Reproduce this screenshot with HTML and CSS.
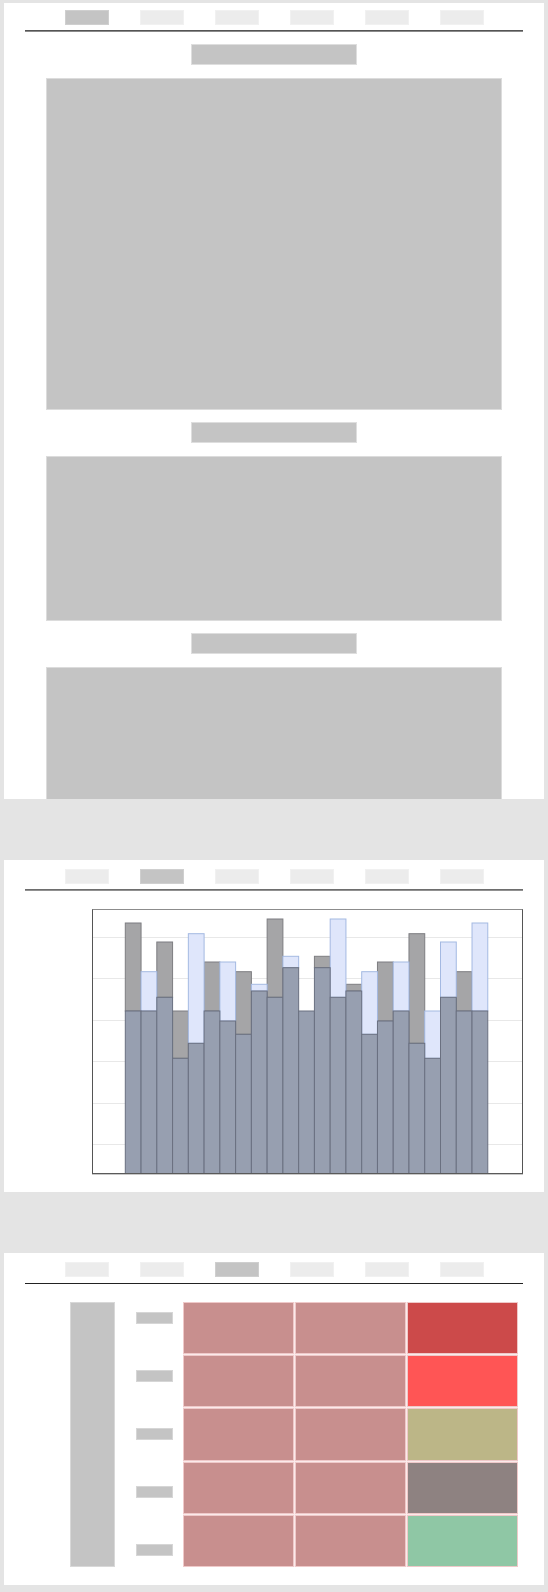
FILE: index.html
```html
<!DOCTYPE html>
<html>
<head>
<meta charset="utf-8">
<title>Slides</title>
<link rel="stylesheet" href="styles.css">
</head>
<body>
<div class="page">
  <section class="card card-first">
    <nav class="tabs">
      <span class="tab active"></span><span class="tab"></span><span class="tab"></span><span class="tab"></span><span class="tab"></span><span class="tab"></span>
    </nav>
    <div class="rule rule-gray"></div>
    <div class="title"></div>
    <div class="box box-tall"></div>
    <div class="title"></div>
    <div class="box box-mid"></div>
    <div class="title"></div>
    <div class="box box-tall"></div>
  </section>

  <section class="card card-small">
    <nav class="tabs">
      <span class="tab"></span><span class="tab active"></span><span class="tab"></span><span class="tab"></span><span class="tab"></span><span class="tab"></span>
    </nav>
    <div class="rule rule-mid"></div>
    <div class="chart">
      <svg class="chart-svg" width="429" height="263" viewBox="0 0 429 263">
        <g class="grid">
          <line x1="0" y1="27.5" x2="429" y2="27.5"/>
          <line x1="0" y1="68.5" x2="429" y2="68.5"/>
          <line x1="0" y1="110.5" x2="429" y2="110.5"/>
          <line x1="0" y1="151.5" x2="429" y2="151.5"/>
          <line x1="0" y1="193.5" x2="429" y2="193.5"/>
          <line x1="0" y1="234.5" x2="429" y2="234.5"/>
        </g>
        <g class="ex-g">
          <rect x="32.3" y="13" width="15.76" height="88"/>
          <rect x="63.82" y="32" width="15.76" height="55.3"/>
          <rect x="79.58" y="101" width="15.76" height="47.3"/>
          <rect x="111.1" y="52" width="15.76" height="49"/>
          <rect x="142.62" y="61.7" width="15.76" height="62.6"/>
          <rect x="174.14" y="9" width="15.76" height="78.3"/>
          <rect x="221.42" y="46.3" width="15.76" height="11.4"/>
          <rect x="252.94" y="74.3" width="15.76" height="6.7"/>
          <rect x="284.46" y="52" width="15.76" height="59"/>
          <rect x="315.98" y="23.7" width="15.76" height="109.6"/>
          <rect x="363.26" y="61.7" width="15.76" height="39.3"/>
        </g>
        <g class="ex-b">
          <rect x="48.06" y="61.7" width="15.76" height="39.3"/>
          <rect x="95.34" y="23.7" width="15.76" height="109.6"/>
          <rect x="126.86" y="52" width="15.76" height="59"/>
          <rect x="158.38" y="74.3" width="15.76" height="6.7"/>
          <rect x="189.9" y="46.3" width="15.76" height="11.4"/>
          <rect x="237.18" y="9" width="15.76" height="78.3"/>
          <rect x="268.7" y="61.7" width="15.76" height="62.6"/>
          <rect x="300.22" y="52" width="15.76" height="49"/>
          <rect x="331.74" y="101" width="15.76" height="47.3"/>
          <rect x="347.5" y="32" width="15.76" height="55.3"/>
          <rect x="379.02" y="13" width="15.76" height="88"/>
        </g>
        <g class="ov">
          <rect x="32.3" y="101" width="15.76" height="163"/>
          <rect x="48.06" y="101" width="15.76" height="163"/>
          <rect x="63.82" y="87.3" width="15.76" height="176.7"/>
          <rect x="79.58" y="148.3" width="15.76" height="115.7"/>
          <rect x="95.34" y="133.3" width="15.76" height="130.7"/>
          <rect x="111.1" y="101" width="15.76" height="163"/>
          <rect x="126.86" y="111" width="15.76" height="153"/>
          <rect x="142.62" y="124.3" width="15.76" height="139.7"/>
          <rect x="158.38" y="81" width="15.76" height="183"/>
          <rect x="174.14" y="87.3" width="15.76" height="176.7"/>
          <rect x="189.9" y="57.7" width="15.76" height="206.3"/>
          <rect x="205.66" y="101" width="15.76" height="163"/>
          <rect x="221.42" y="57.7" width="15.76" height="206.3"/>
          <rect x="237.18" y="87.3" width="15.76" height="176.7"/>
          <rect x="252.94" y="81" width="15.76" height="183"/>
          <rect x="268.7" y="124.3" width="15.76" height="139.7"/>
          <rect x="284.46" y="111" width="15.76" height="153"/>
          <rect x="300.22" y="101" width="15.76" height="163"/>
          <rect x="315.98" y="133.3" width="15.76" height="130.7"/>
          <rect x="331.74" y="148.3" width="15.76" height="115.7"/>
          <rect x="347.5" y="87.3" width="15.76" height="176.7"/>
          <rect x="363.26" y="101" width="15.76" height="163"/>
          <rect x="379.02" y="101" width="15.76" height="163"/>
        </g>
      </svg>
    </div>
  </section>

  <section class="card card-small">
    <nav class="tabs">
      <span class="tab"></span><span class="tab"></span><span class="tab active"></span><span class="tab"></span><span class="tab"></span><span class="tab"></span>
    </nav>
    <div class="rule rule-dark"></div>
    <div class="heat">
      <div class="heat-axis"></div>
      <div class="heat-labels">
        <span class="heat-label"></span><span class="heat-label"></span><span class="heat-label"></span><span class="heat-label"></span><span class="heat-label"></span>
      </div>
      <div class="heat-grid">
        <div class="cell"></div><div class="cell"></div><div class="cell c-red"></div>
        <div class="cell"></div><div class="cell"></div><div class="cell c-bright"></div>
        <div class="cell"></div><div class="cell"></div><div class="cell c-khaki"></div>
        <div class="cell"></div><div class="cell"></div><div class="cell c-gray"></div>
        <div class="cell"></div><div class="cell"></div><div class="cell c-green"></div>
      </div>
    </div>
  </section>
</div>
</body>
</html>
```

FILE: styles.css
```css
* {
  box-sizing: border-box;
}

html, body {
  margin: 0;
  padding: 0;
  background: #e4e4e4;
  font-family: "Liberation Sans", Arial, sans-serif;
}

.page {
  padding: 3px 4px 0 4px;
  display: flex;
  flex-direction: column;
  gap: 61px;
}

.card {
  background: #ffffff;
  width: 540px;
  overflow: hidden;
  padding-top: 9px;
}

.card-first {
  height: 796px;
  padding-top: 7px;
}

.card-small {
  height: 332px;
}

/* tabs */
.tabs {
  display: flex;
  justify-content: center;
  height: 13px;
}

.tab {
  width: 75px;
  height: 13px;
  display: flex;
  justify-content: center;
  position: relative;
}

.tab::before {
  content: "";
  width: 42px;
  height: 13px;
  background: #ececec;
  border: 1px solid #f1f1f1;
}

.tab.active::before {
  background: #c4c4c4;
  border-color: #cfcfcf;
}

/* rule under tabs */
.rule {
  margin: 7px 21px 0 21px;
  height: 2px;
}

.rule-gray {
  border-top: 1px solid #555555;
  border-bottom: 1px solid #8a8a8a;
}

.rule-mid {
  border-top: 1px solid #6e6e6e;
  border-bottom: 1px solid #909090;
}

.rule-dark {
  height: 1px;
  margin-top: 8px;
  background: #222222;
}

/* first card blocks */
.title {
  width: 166px;
  height: 21px;
  margin: 12px auto 0 auto;
  background: #c4c4c4;
  border: 1px solid #dedede;
}

.box {
  width: 456px;
  margin: 13px auto 0 auto;
  background: #c4c4c4;
  border: 1px solid #dcdcdc;
}

.box-tall {
  height: 332px;
}

.box-mid {
  height: 165px;
}

/* chart */
.chart {
  margin: 18px 0 0 88px;
  width: 431px;
  height: 265px;
  border: 1px solid #555555;
  border-top-color: #8c8c8c;
  border-bottom-color: #5a5a5a;
  box-shadow: 0 1px 0 #c8c8c8;
}

.chart-svg {
  display: block;
}

.grid line {
  stroke: #e8e8e8;
  stroke-width: 1;
}

.ex-g rect {
  fill: #a5a5a7;
  stroke: #7d7d81;
  stroke-width: 1;
}

.ex-b rect {
  fill: #dfe6fb;
  stroke: #a4b9e2;
  stroke-width: 1;
}

.ov rect {
  fill: #979fb0;
  stroke: #6a7080;
  stroke-width: 1;
}

/* heatmap */
.heat {
  display: flex;
  margin-top: 18px;
  height: 265px;
}

.heat-axis {
  width: 45px;
  height: 265px;
  margin-left: 66px;
  background: #c4c4c4;
  border: 1px solid #d8d8d8;
}

.heat-labels {
  width: 37px;
  margin-left: 21px;
  padding-top: 10px;
  display: flex;
  flex-direction: column;
  gap: 46px;
}

.heat-label {
  display: block;
  width: 37px;
  height: 12px;
  background: #c4c4c4;
  border: 1px solid #d6d6d6;
}

.heat-grid {
  margin-left: 10px;
  width: 335px;
  height: 265px;
  display: grid;
  grid-template-columns: repeat(3, 1fr);
  grid-template-rows: repeat(5, 1fr);
  gap: 1px;
  background: #fbeaea;
}

.cell {
  background: #c88f8e;
  border: 1px solid #efc9c9;
}

.c-red {
  background: #cc4a4a;
}

.c-bright {
  background: #ff5555;
}

.c-khaki {
  background: #bcb687;
}

.c-gray {
  background: #8e8281;
}

.c-green {
  background: #8fc7a5;
}
```
